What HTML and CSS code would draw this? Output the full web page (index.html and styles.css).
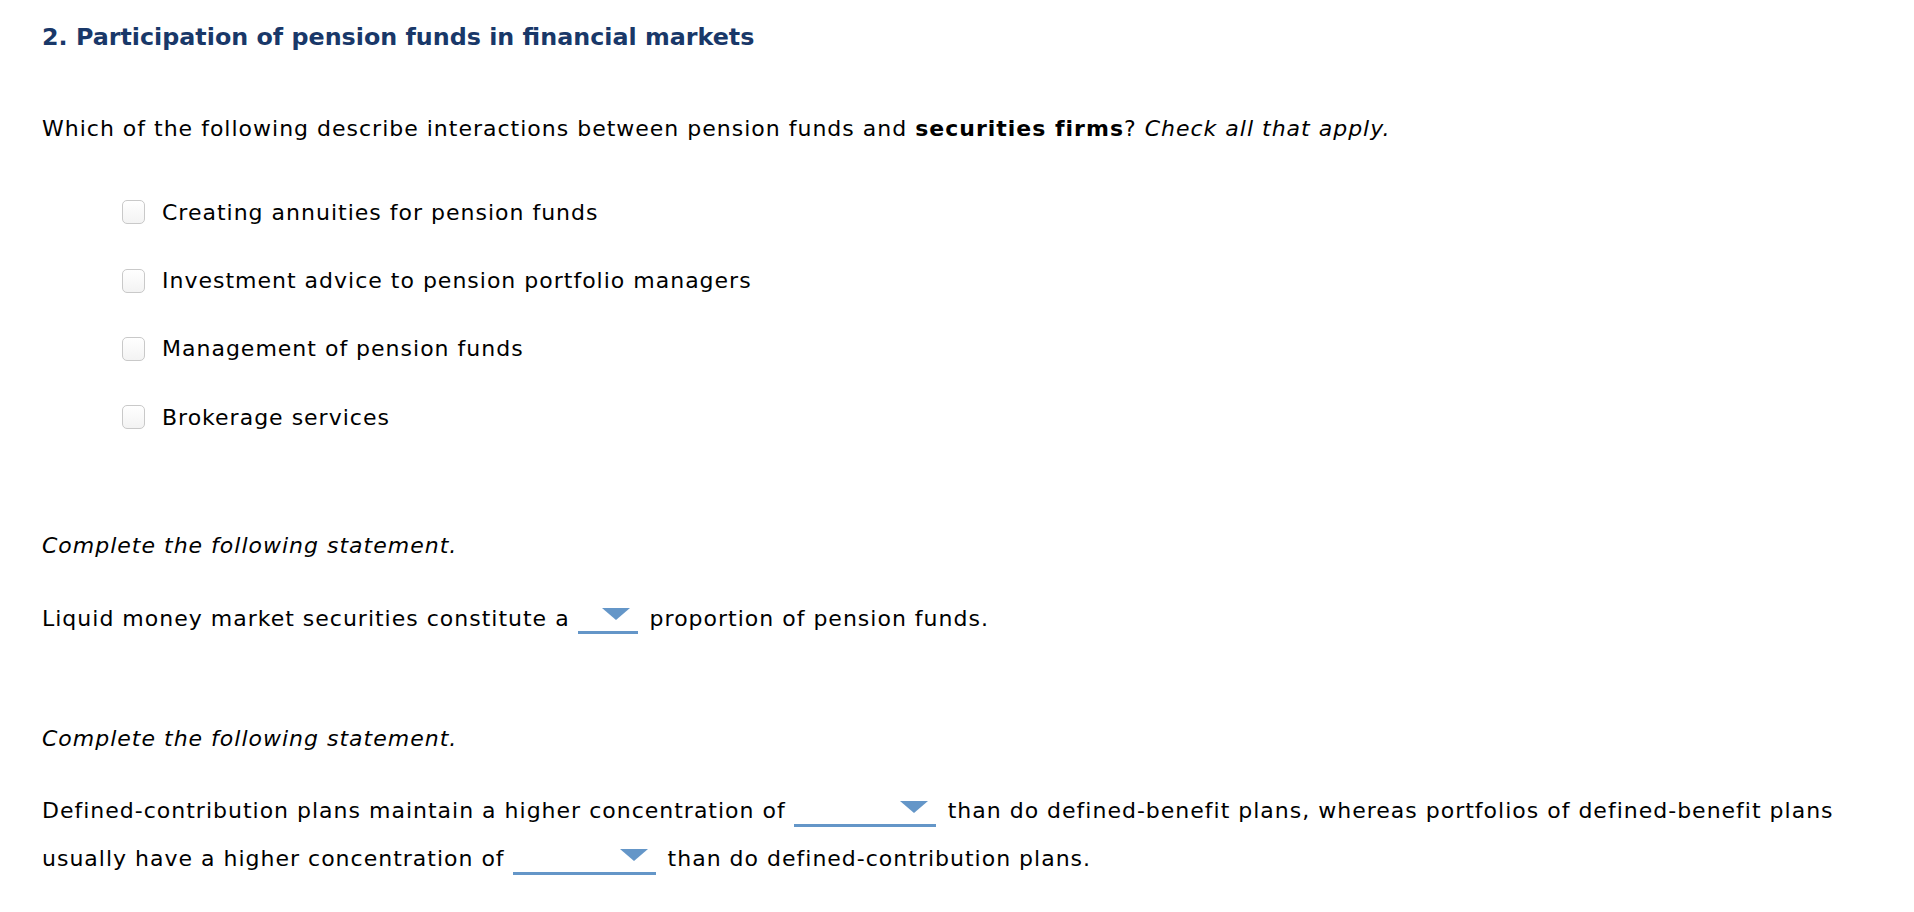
FILE: index.html
```html
<!DOCTYPE html>
<html>
<head>
<meta charset="utf-8">
<link rel="stylesheet" href="styles.css">
</head>
<body>
<div class="page">
  <h2 class="title">2. Participation of pension funds in financial markets</h2>
  <p class="question">Which of the following describe interactions between pension funds and <b>securities firms</b>? <i>Check all that apply.</i></p>
  <ul class="options">
    <li class="option"><span class="box"></span><span>Creating annuities for pension funds</span></li>
    <li class="option"><span class="box"></span><span>Investment advice to pension portfolio managers</span></li>
    <li class="option"><span class="box"></span><span>Management of pension funds</span></li>
    <li class="option"><span class="box"></span><span>Brokerage services</span></li>
  </ul>
  <p class="instr first">Complete the following statement.</p>
  <p class="stmt one">Liquid money market securities constitute a <span class="dd w60"><svg width="28" height="12" viewBox="0 0 28 12"><path d="M0 0H28L14 12Z" fill="#6496c8"/></svg></span> proportion of pension funds.</p>
  <p class="instr second">Complete the following statement.</p>
  <p class="stmt two">Defined-contribution plans maintain a higher concentration of <span class="dd w142"><svg width="28" height="12" viewBox="0 0 28 12"><path d="M0 0H28L14 12Z" fill="#6496c8"/></svg></span> than do defined-benefit plans, whereas portfolios of defined-benefit plans usually have a higher concentration of <span class="dd w143"><svg width="28" height="12" viewBox="0 0 28 12"><path d="M0 0H28L14 12Z" fill="#6496c8"/></svg></span> than do defined-contribution plans.</p>
</div>
</body>
</html>
```
FILE: styles.css
```css
html, body {
  margin: 0;
  padding: 0;
  background: #ffffff;
}
body {
  font-family: "DejaVu Sans", Verdana, sans-serif;
  font-size: 22px;
  letter-spacing: 1px;
  color: #000000;
}
.page {
  padding: 22px 43px 0 42px;
}
.title {
  margin: 0;
  font-size: 23.8px;
  letter-spacing: 0;
  line-height: 30px;
  font-weight: bold;
  color: #193869;
}
.question {
  margin: 62px 0 0 0;
  line-height: 30px;
}
.options {
  list-style: none;
  margin: 34px 0 0 0;
  padding: 0 0 0 80px;
  display: flex;
  flex-direction: column;
}
.option {
  display: flex;
  align-items: center;
  height: 68.4px;
}
.box {
  width: 23px;
  height: 24px;
  box-sizing: border-box;
  border: 1px solid #c9c9c9;
  border-radius: 5px;
  background: linear-gradient(#ffffff, #f3f3f3);
  margin-right: 17px;
  flex: none;
}
.instr {
  margin: 0;
  line-height: 30px;
  font-style: italic;
}
.instr.first { margin-top: 79px; }
.instr.second { margin-top: 90px; }
.stmt {
  margin: 0;
}
.stmt.one {
  margin-top: 43px;
  line-height: 30px;
}
.stmt.two {
  margin-top: 33px;
  line-height: 48px;
}
.dd {
  display: inline-flex;
  justify-content: flex-end;
  align-items: flex-start;
  box-sizing: border-box;
  height: 29px;
  padding: 3px 8px 0 0;
  border-bottom: 3px solid #6496c8;
  vertical-align: middle;
  margin-right: 4px;
}
.dd svg { display: block; }
.w60 { width: 60px; }
.w142 { width: 142px; }
.w143 { width: 143px; }
```
